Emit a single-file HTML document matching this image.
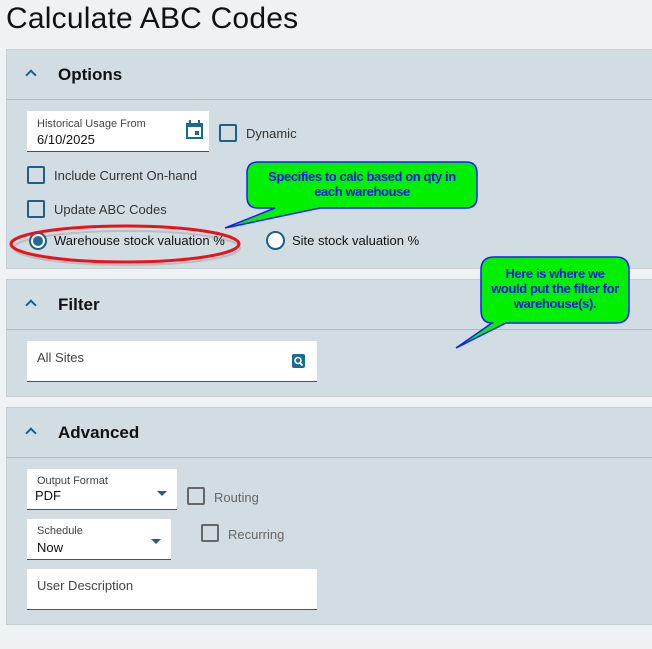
<!DOCTYPE html>
<html><head><style>
*{margin:0;padding:0;box-sizing:border-box}
body{width:652px;height:649px;background:#eef2f5;font-family:"Liberation Sans",sans-serif;position:relative;overflow:hidden}
.a{position:absolute}
h1{position:absolute;left:6px;top:2px;font-weight:normal;font-size:30px;color:#111;letter-spacing:0.2px}
.panel{position:absolute;left:6px;width:660px;background:#d1dde2;border:1px solid #c6cfd4}
.hdr{position:absolute;left:0;top:0;width:100%;height:50px;border-bottom:1px solid #9fbccb}
.hdr b{position:absolute;left:51px;top:15px;font-size:17px;color:#111}
.chev{position:absolute;left:20px;top:21px;width:8px;height:8px;border-left:2px solid #1d5f85;border-top:2px solid #1d5f85;transform:rotate(45deg)}
.field{position:absolute;background:#fff;border-bottom:1px solid #1d5f85}
.lbl{position:absolute;left:10px;font-size:11px;color:#444}
.val{position:absolute;left:9px;font-size:13px;color:#111}
.cb{position:absolute;width:18px;height:18px;border:2px solid #1d5f85;border-radius:2px}
.cbg{border-color:#666}
.t{position:absolute;font-size:13px;color:#333}
.caret{position:absolute;width:0;height:0;border-left:5px solid transparent;border-right:5px solid transparent;border-top:5px solid #1d5f85}
</style></head><body>
<h1>Calculate ABC Codes</h1>

<div class="panel" style="top:49px;height:220px"><div class="hdr"><span class="chev"></span><b>Options</b></div></div>
<div class="panel" style="top:279px;height:118px"><div class="hdr"><span class="chev"></span><b>Filter</b></div></div>
<div class="panel" style="top:407px;height:218px"><div class="hdr"><span class="chev"></span><b>Advanced</b></div></div>

<div class="field" style="left:27px;top:111px;width:182px;height:41px">
<span class="lbl" style="top:7px">Historical Usage From</span><span class="val" style="top:21px;left:10px">6/10/2025</span>
<svg class="a" style="left:158px;top:9px" width="19" height="20" viewBox="0 0 19 20"><rect x="1" y="3" width="17" height="16" fill="#1a6b94"/><rect x="3" y="7" width="13" height="10" fill="#fff"/><rect x="4" y="0" width="2" height="5" fill="#1a6b94"/><rect x="13" y="0" width="2" height="5" fill="#1a6b94"/><rect x="10" y="11" width="4" height="4" fill="#1a6b94"/></svg>
</div>
<div class="cb" style="left:219px;top:124px"></div><span class="t" style="left:246px;top:126px">Dynamic</span>
<div class="cb" style="left:27px;top:166px"></div><span class="t" style="left:54px;top:168px">Include Current On-hand</span>
<div class="cb" style="left:27px;top:200px"></div><span class="t" style="left:54px;top:202px">Update ABC Codes</span>
<div class="a" style="left:29px;top:232px;width:18px;height:18px;border:2px solid #1d5f85;border-radius:50%;background:#fff"><div class="a" style="left:2px;top:2px;width:10px;height:10px;border-radius:50%;background:#1d6a94"></div></div>
<span class="t" style="left:54px;top:233px;color:#111">Warehouse stock valuation %</span>
<div class="a" style="left:266px;top:231px;width:19px;height:19px;border:2px solid #1d5f85;border-radius:50%;background:#fff"></div>
<span class="t" style="left:292px;top:233px;color:#111">Site stock valuation %</span>

<div class="field" style="left:27px;top:341px;width:290px;height:41px">
<span class="val" style="top:9px;left:10px;color:#444">All Sites</span>
<svg class="a" style="left:265px;top:13px" width="13" height="14" viewBox="0 0 13 14"><rect width="13" height="14" rx="2" fill="#1a6b94"/><circle cx="6" cy="6.5" r="3" fill="none" stroke="#fff" stroke-width="1.6"/><path d="M8 9l2.5 2.5" stroke="#fff" stroke-width="1.8"/></svg>
</div>

<div class="field" style="left:27px;top:469px;width:150px;height:41px">
<span class="lbl" style="top:6px">Output Format</span><span class="val" style="top:19px;left:8px">PDF</span><span class="caret" style="left:130px;top:22px"></span></div>
<div class="cb cbg" style="left:187px;top:487px"></div><span class="t" style="left:214px;top:490px;color:#666">Routing</span>
<div class="field" style="left:27px;top:519px;width:144px;height:41px">
<span class="lbl" style="top:6px">Schedule</span><span class="val" style="top:21px;left:10px">Now</span><span class="caret" style="left:124px;top:20px"></span></div>
<div class="cb cbg" style="left:201px;top:524px"></div><span class="t" style="left:228px;top:527px;color:#666">Recurring</span>
<div class="field" style="left:27px;top:569px;width:290px;height:41px">
<span class="val" style="top:9px;left:10px;color:#444">User Description</span></div>

<svg class="a" style="left:0;top:0" width="652" height="649">
<ellipse cx="126" cy="246" rx="113" ry="17" fill="none" stroke="#666" stroke-width="2" opacity=".25" transform="translate(1,2)"/>
<ellipse cx="125" cy="244" rx="114" ry="18" fill="none" stroke="#e8141a" stroke-width="3"/>
<path d="M258 162 H466 Q477 162 477 173 V197 Q477 208 466 208 H320 L225 228 L275 208 H258 Q247 208 247 197 V173 Q247 162 258 162 Z" fill="#00f000" stroke="#1a1aff" stroke-width="1.5"/>
<path d="M494 257 H616 Q629 257 629 270 V310 Q629 323 616 323 H506 L456 348 L492 323 Q481 323 481 310 V270 Q481 257 494 257 Z" fill="#00f000" stroke="#1a1aff" stroke-width="1.5"/>
<g font-family="Liberation Sans,sans-serif" font-weight="bold" font-size="13" fill="#1414e6" text-anchor="middle" letter-spacing="-0.4">
<text x="362" y="181">Specifies to calc based on qty in</text>
<text x="362" y="196">each warehouse</text>
<text x="555" y="278">Here is where we</text>
<text x="555" y="293">would put the filter for</text>
<text x="555" y="308">warehouse(s).</text>
</g>
</svg>
</body></html>
